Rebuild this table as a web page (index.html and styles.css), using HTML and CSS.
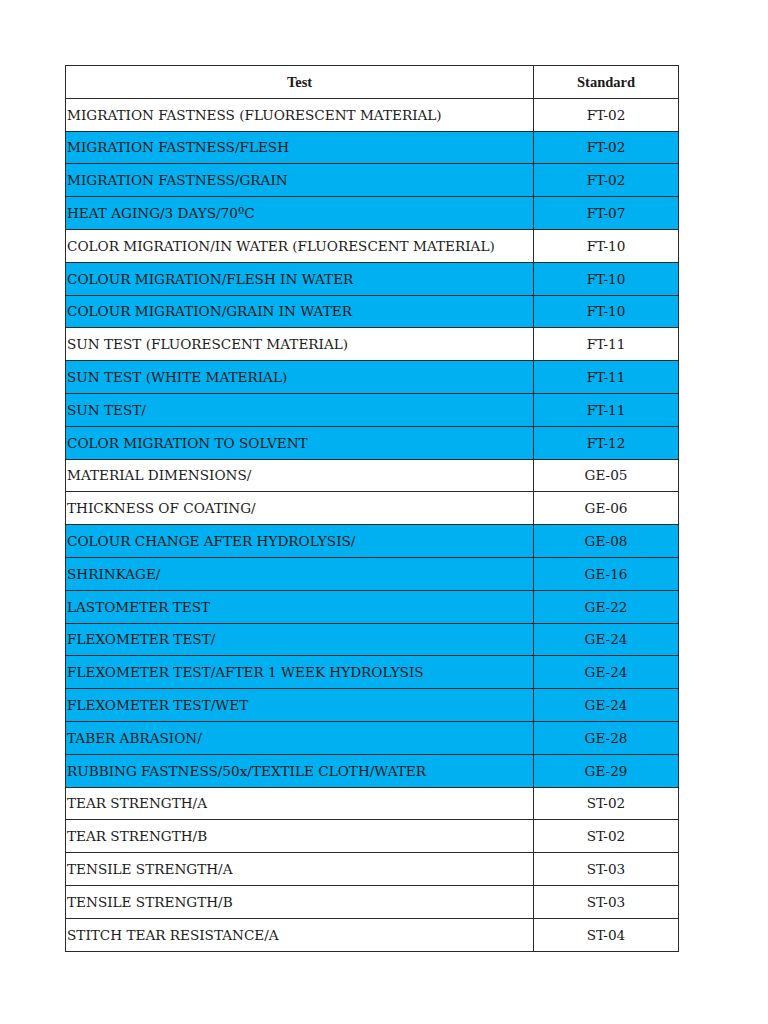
FILE: index.html
```html
<!DOCTYPE html>
<html>
<head>
<meta charset="utf-8">
<link rel="stylesheet" href="styles.css">
</head>
<body>
<table class="tests">
<thead>
<tr><th class="c-test">Test</th><th class="c-std">Standard</th></tr>
</thead>
<tbody>
<tr><td class="c-test">MIGRATION FASTNESS (FLUORESCENT MATERIAL)</td><td class="c-std">FT-02</td></tr>
<tr class="hl"><td class="c-test">MIGRATION FASTNESS/FLESH</td><td class="c-std">FT-02</td></tr>
<tr class="hl"><td class="c-test">MIGRATION FASTNESS/GRAIN</td><td class="c-std">FT-02</td></tr>
<tr class="hl"><td class="c-test">HEAT AGING/3 DAYS/70ºC</td><td class="c-std">FT-07</td></tr>
<tr><td class="c-test">COLOR MIGRATION/IN WATER (FLUORESCENT MATERIAL)</td><td class="c-std">FT-10</td></tr>
<tr class="hl"><td class="c-test">COLOUR MIGRATION/FLESH IN WATER</td><td class="c-std">FT-10</td></tr>
<tr class="hl"><td class="c-test">COLOUR MIGRATION/GRAIN IN WATER</td><td class="c-std">FT-10</td></tr>
<tr><td class="c-test">SUN TEST (FLUORESCENT MATERIAL)</td><td class="c-std">FT-11</td></tr>
<tr class="hl"><td class="c-test">SUN TEST (WHITE MATERIAL)</td><td class="c-std">FT-11</td></tr>
<tr class="hl"><td class="c-test">SUN TEST/</td><td class="c-std">FT-11</td></tr>
<tr class="hl"><td class="c-test">COLOR MIGRATION TO SOLVENT</td><td class="c-std">FT-12</td></tr>
<tr><td class="c-test">MATERIAL DIMENSIONS/</td><td class="c-std">GE-05</td></tr>
<tr><td class="c-test">THICKNESS OF COATING/</td><td class="c-std">GE-06</td></tr>
<tr class="hl"><td class="c-test">COLOUR CHANGE AFTER HYDROLYSIS/</td><td class="c-std">GE-08</td></tr>
<tr class="hl"><td class="c-test">SHRINKAGE/</td><td class="c-std">GE-16</td></tr>
<tr class="hl"><td class="c-test">LASTOMETER TEST</td><td class="c-std">GE-22</td></tr>
<tr class="hl"><td class="c-test">FLEXOMETER TEST/</td><td class="c-std">GE-24</td></tr>
<tr class="hl"><td class="c-test">FLEXOMETER TEST/AFTER 1 WEEK HYDROLYSIS</td><td class="c-std">GE-24</td></tr>
<tr class="hl"><td class="c-test">FLEXOMETER TEST/WET</td><td class="c-std">GE-24</td></tr>
<tr class="hl"><td class="c-test">TABER ABRASION/</td><td class="c-std">GE-28</td></tr>
<tr class="hl"><td class="c-test">RUBBING FASTNESS/50x/TEXTILE CLOTH/WATER</td><td class="c-std">GE-29</td></tr>
<tr><td class="c-test">TEAR STRENGTH/A</td><td class="c-std">ST-02</td></tr>
<tr><td class="c-test">TEAR STRENGTH/B</td><td class="c-std">ST-02</td></tr>
<tr><td class="c-test">TENSILE STRENGTH/A</td><td class="c-std">ST-03</td></tr>
<tr><td class="c-test">TENSILE STRENGTH/B</td><td class="c-std">ST-03</td></tr>
<tr><td class="c-test">STITCH TEAR RESISTANCE/A</td><td class="c-std">ST-04</td></tr>
</tbody>
</table>
</body>
</html>
```
FILE: styles.css
```css
html, body {
  margin: 0;
  padding: 0;
  background: #ffffff;
}
body {
  padding: 65px 0 0 65px;
  font-family: "DejaVu Serif", "Liberation Serif", serif;
  color: #1a1a1a;
}
.tests {
  border-collapse: collapse;
  width: 613px;
  table-layout: fixed;
}
.tests th, .tests td {
  border: 1px solid #2a2a2a;
  height: 32.8px;
  padding: 0 1px;
  box-sizing: border-box;
  font-size: 13.6px;
  line-height: 16px;
  vertical-align: middle;
  white-space: nowrap;
}
.tests th {
  font-family: "Liberation Serif", serif;
  font-weight: bold;
  font-size: 14.5px;
  text-align: center;
}
.c-test { width: 468px; text-align: left; }
.c-std { width: 145px; text-align: center; }
.tests th.c-test { text-align: center; }
.hl td { background: #00b0f0; }
```
